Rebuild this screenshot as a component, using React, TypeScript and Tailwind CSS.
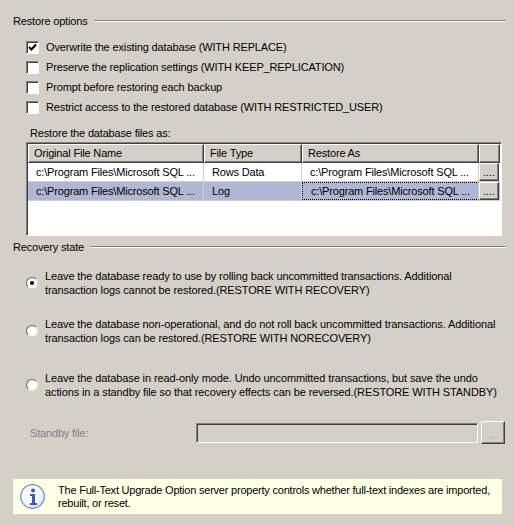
import React from 'react';

const raised = 'border border-t-white border-l-white border-r-[#404040] border-b-[#404040] shadow-[inset_-1px_-1px_0_#808080]';
const sunken = 'border border-t-[#808080] border-l-[#808080] border-r-white border-b-white shadow-[inset_1px_1px_0_#404040]';

const GroupTitle = ({ title }: { title: string }) => (
  <div className="flex items-center gap-[6px] pl-[13px] pr-2 h-[14px]">
    <span>{title}</span>
    <div className="flex-1 h-[2px] border-t border-t-[#808080] border-b border-b-white" />
  </div>
);

const Check = ({ label, checked }: { label: string; checked?: boolean }) => (
  <div className="flex items-center gap-[7px] h-[20px]">
    <div className={`w-[13px] h-[13px] bg-white flex items-center justify-center ${sunken}`}>
      {checked && (
        <svg width="9" height="9" viewBox="0 0 9 9">
          <path d="M1 4 L3.5 6.5 L8 1.5" stroke="#000" strokeWidth="2" fill="none" />
        </svg>
      )}
    </div>
    <span className="tracking-[-0.14px]">{label}</span>
  </div>
);

const Radio = ({ lines, checked, className }: { lines: string[]; checked?: boolean; className: string }) => (
  <div className={`flex items-center gap-[7px] ${className}`}>
    <div className="w-[12px] h-[12px] rounded-full bg-white border border-t-[#606060] border-l-[#606060] border-r-[#e8e8e8] border-b-[#e8e8e8] flex items-center justify-center shrink-0">
      {checked && <div className="w-[4px] h-[4px] rounded-full bg-black" />}
    </div>
    <div className="leading-[14px] whitespace-nowrap tracking-[-0.11px]">
      {lines.map((l) => (
        <div key={l}>{l}</div>
      ))}
    </div>
  </div>
);

const EllipsisBtn = () => (
  <div className={`w-[20px] h-[18px] bg-[#d4d0c8] flex items-center justify-center ${raised}`}>....</div>
);

const HeaderCell = ({ label, width }: { label: string; width: string }) => (
  <div className={`h-[19px] bg-[#d4d0c8] pl-[5px] pb-px flex items-center ${width} ${raised}`}>{label}</div>
);

const Cell = ({ label, width, focus }: { label: string; width: string; focus?: boolean }) => (
  <div className={`h-full pl-[8px] flex items-center whitespace-nowrap border-r border-r-[#d4d0c8] ${width} ${focus ? 'border border-dotted border-black' : ''}`}>
    {label}
  </div>
);

const PATH = 'c:\\Program Files\\Microsoft SQL ...';

export default function App() {
  return (
    <div className="w-[514px] h-[525px] bg-[#d4d0c8] overflow-hidden text-[11px] tracking-[-0.17px] leading-[14px] text-black font-['Liberation_Sans',sans-serif] pt-[14px]">
      <GroupTitle title="Restore options" />

      {/* Options */}
      <div className="pl-[26px] pt-[9px]">
        <Check label="Overwrite the existing database (WITH REPLACE)" checked />
        <Check label="Preserve the replication settings (WITH KEEP_REPLICATION)" />
        <Check label="Prompt before restoring each backup" />
        <Check label="Restrict access to the restored database (WITH RESTRICTED_USER)" />
      </div>

      <div className="pl-[30px] pt-[9px] h-[25px]">Restore the database files as:</div>

      {/* Files grid */}
      <div className={`ml-[26px] w-[476px] h-[94px] bg-white p-px ${sunken}`}>
        <div className="flex">
          <HeaderCell label="Original File Name" width="w-[176px]" />
          <HeaderCell label="File Type" width="w-[98px]" />
          <HeaderCell label="Restore As" width="w-[177px]" />
          <HeaderCell label="" width="w-[21px]" />
        </div>
        <div className="flex h-[19px] border-b border-b-[#d4d0c8]">
          <Cell label={PATH} width="w-[176px]" />
          <Cell label="Rows Data" width="w-[98px]" />
          <Cell label={PATH} width="w-[177px]" />
          <EllipsisBtn />
        </div>
        <div className="flex h-[19px] bg-[#b0b7d4] border-b border-b-[#d4d0c8]">
          <Cell label={PATH} width="w-[176px]" />
          <Cell label="Log" width="w-[98px]" />
          <Cell label={PATH} width="w-[177px]" focus />
          <EllipsisBtn />
        </div>
      </div>

      <div className="pt-[4px]">
        <GroupTitle title="Recovery state" />
      </div>

      {/* Recovery */}
      <div className="pl-[26px]">
        <Radio
          checked
          className="pt-[15px]"
          lines={[
            'Leave the database ready to use by rolling back uncommitted transactions. Additional',
            'transaction logs cannot be restored.(RESTORE WITH RECOVERY)',
          ]}
        />
        <Radio
          className="pt-[20px]"
          lines={[
            'Leave the database non-operational, and do not roll back uncommitted transactions. Additional',
            'transaction logs can be restored.(RESTORE WITH NORECOVERY)',
          ]}
        />
        <Radio
          className="pt-[26px]"
          lines={[
            'Leave the database in read-only mode. Undo uncommitted transactions, but save the undo',
            'actions in a standby file so that recovery effects can be reversed.(RESTORE WITH STANDBY)',
          ]}
        />
      </div>

      {/* Standby */}
      <div className="flex items-center pl-[30px] pt-[22px]">
        <span className="w-[166px] text-[#808080]">Standby file:</span>
        <div className={`w-[282px] h-[20px] ${sunken}`} />
        <div className={`ml-[3px] w-[24px] h-[23px] flex items-end justify-center pb-[2px] text-[#a0a0a0] ${raised}`}>...</div>
      </div>

      {/* Info bar */}
      <div className="mt-[35px] ml-[13px] w-[489px] h-[35px] bg-[#ffffe6] flex items-center pl-[7px]">
        <svg width="26" height="26" viewBox="0 0 26 26" className="shrink-0">
          <defs>
            <radialGradient id="b" cx="0.4" cy="0.35" r="0.75">
              <stop offset="0" stopColor="#ffffff" />
              <stop offset="0.7" stopColor="#eef2fa" />
              <stop offset="1" stopColor="#b8c8e8" />
            </radialGradient>
          </defs>
          <circle cx="12.5" cy="12.5" r="11.8" fill="url(#b)" stroke="#6c8cc8" strokeWidth="1.2" />
          <circle cx="13" cy="6.5" r="2" fill="#3a5cb8" />
          <path d="M10 10 H15 V19 H17 V21 H10 V19 H12 V12 H10 Z" fill="#3a5cb8" />
        </svg>
        <div className="pl-[12px] leading-[13px] whitespace-nowrap tracking-[-0.22px]">
          <div>The Full-Text Upgrade Option server property controls whether full-text indexes are imported,</div>
          <div>rebuilt, or reset.</div>
        </div>
      </div>
    </div>
  );
}
